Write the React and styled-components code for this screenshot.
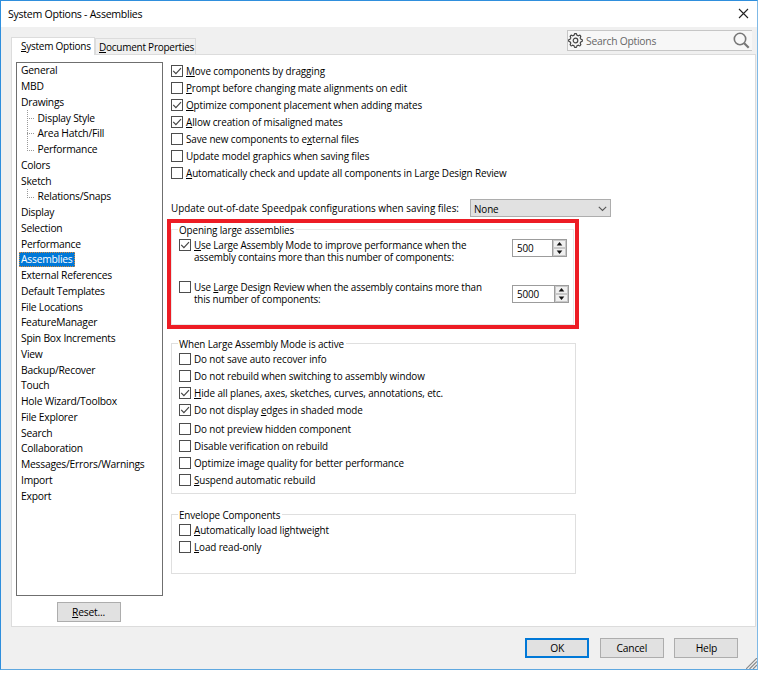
import React, { useState } from 'react';
import styled, { createGlobalStyle } from 'styled-components';

const PAGES = [
  { name: 'General' },
  { name: 'MBD' },
  { name: 'Drawings' },
  { name: 'Display Style', child: true },
  { name: 'Area Hatch/Fill', child: true },
  { name: 'Performance', child: true, last: true, id: 'drawings-performance' },
  { name: 'Colors' },
  { name: 'Sketch' },
  { name: 'Relations/Snaps', child: true, last: true },
  { name: 'Display' },
  { name: 'Selection' },
  { name: 'Performance' },
  { name: 'Assemblies' },
  { name: 'External References' },
  { name: 'Default Templates' },
  { name: 'File Locations' },
  { name: 'FeatureManager' },
  { name: 'Spin Box Increments' },
  { name: 'View' },
  { name: 'Backup/Recover' },
  { name: 'Touch' },
  { name: 'Hole Wizard/Toolbox' },
  { name: 'File Explorer' },
  { name: 'Search' },
  { name: 'Collaboration' },
  { name: 'Messages/Errors/Warnings' },
  { name: 'Import' },
  { name: 'Export' },
];

// "&" marks the access key, as in a Win32 resource file
const GENERAL_OPTIONS = [
  { label: '&Move components by dragging', checked: true },
  { label: '&Prompt before changing mate alignments on edit' },
  { label: '&Optimize component placement when adding mates', checked: true },
  { label: '&Allow creation of misaligned mates', checked: true },
  { label: 'Save new components to e&xternal files' },
  { label: 'Update model graphics when saving files' },
  { label: '&Automatically check and update all components in Large Design Review' },
];

const LARGE_MODE_OPTIONS = [
  { label: 'Do not save auto recover info' },
  { label: 'Do not rebuild when switching to assembly window' },
  { label: '&Hide all planes, axes, sketches, curves, annotations, etc.', checked: true },
  { label: 'Do not display &edges in shaded mode', checked: true },
  { label: 'Do not preview hidden component', space: 1 },
  { label: 'Disable verification on rebuild' },
  { label: 'Optimize image quality for better performance' },
  { label: '&Suspend automatic rebuild' },
];

const ENVELOPE_OPTIONS = [
  { label: '&Automatically load lightweight' },
  { label: '&Load read-only' },
];

const Mnemonic = ({ text }) => {
  const at = text.indexOf('&');
  if (at < 0) return <>{text}</>;
  return (
    <>
      {text.slice(0, at)}
      <Key>{text[at + 1]}</Key>
      {text.slice(at + 2)}
    </>
  );
};

const Option = ({ label, checked, space }) => {
  const [on, setOn] = useState(!!checked);
  return (
    <OptionRow $space={space} onClick={() => setOn(!on)}>
      <CheckBox on={on} />
      <OptionText>
        <Mnemonic text={label} />
      </OptionText>
    </OptionRow>
  );
};

const CheckBox = ({ on }) => (
  <Box>
    {on && (
      <svg width="10" height="10" viewBox="0 0 10 10">
        <path d="M1.2 4.9 L3.9 7.6 L9 2.2" fill="none" stroke="#444" strokeWidth="1.2" />
      </svg>
    )}
  </Box>
);

const Spinner = ({ value, wide }) => (
  <SpinBox $wide={wide}>
    <SpinValue>{value}</SpinValue>
    <SpinButtons>
      <SpinButton>
        <svg width="7" height="4" viewBox="0 0 7 4">
          <path d="M3.5 0 L6.3 3.6 H0.7 Z" fill="#111" />
        </svg>
      </SpinButton>
      <SpinButton>
        <svg width="7" height="4" viewBox="0 0 7 4">
          <path d="M3.5 4 L6.3 0.4 H0.7 Z" fill="#111" />
        </svg>
      </SpinButton>
    </SpinButtons>
  </SpinBox>
);

const gearPath = () => {
  const points = [];
  for (let i = 0; i <= 96; i += 1) {
    const a = (i / 96) * Math.PI * 2;
    const r = 6.1 + 0.75 * Math.tanh(2.4 * Math.cos(8 * a));
    points.push(`${(7.5 + r * Math.cos(a)).toFixed(2)} ${(7.5 + r * Math.sin(a)).toFixed(2)}`);
  }
  return `M${points.join('L')}Z`;
};

const App = () => {
  const [page, setPage] = useState('Assemblies');

  return (
    <>
      <GlobalStyle />
      <Window>
        <TitleBar>
          <Title>System Options - Assemblies</Title>
          <svg width="11" height="11" viewBox="0 0 11 11">
            <path d="M1 1 L10 10 M10 1 L1 10" stroke="#222" strokeWidth="1.1" />
          </svg>
        </TitleBar>
        <TabBar>
          <Tab $active>
            <Mnemonic text="&System Options" />
          </Tab>
          <Tab>
            <Mnemonic text="&Document Properties" />
          </Tab>
          <SearchBox>
            <svg width="15" height="15" viewBox="0 0 15 15">
              <path d={gearPath()} fill="none" stroke="#444" strokeWidth="1.2" />
              <circle cx="7.5" cy="7.5" r="2.3" fill="none" stroke="#444" strokeWidth="1.2" />
            </svg>
            <SearchText>Search Options</SearchText>
            <svg width="17" height="17" viewBox="0 0 17 17">
              <circle cx="7" cy="7" r="5.7" fill="none" stroke="#777" strokeWidth="1.6" />
              <path d="M11.2 11.2 L15.7 15.7" stroke="#777" strokeWidth="2.2" />
            </svg>
          </SearchBox>
        </TabBar>
        <Panel>
          <Sidebar>
            <PageList>
              {PAGES.map(item => {
                const id = item.id || item.name;
                return (
                  <PageRow key={id} onClick={() => setPage(id)}>
                    {item.child && <Branch $last={item.last} />}
                    <PageName $selected={id === page}>{item.name}</PageName>
                  </PageRow>
                );
              })}
            </PageList>
            <Button>
              <Mnemonic text="&Reset..." />
            </Button>
          </Sidebar>
          <Content>
            {GENERAL_OPTIONS.map(option => (
              <Option key={option.label} {...option} />
            ))}
            <SelectRow>
              <SelectLabel>Update out-of-date Speedpak configurations when saving files:</SelectLabel>
              <Select>
                None
                <svg width="9" height="6" viewBox="0 0 9 6">
                  <path d="M0.8 0.8 L4.5 4.5 L8.2 0.8" fill="none" stroke="#555" strokeWidth="1.1" />
                </svg>
              </Select>
            </SelectRow>
            <Highlight>
              <OpeningGroup>
                <Legend>Opening large assemblies</Legend>
                <ThresholdRow>
                  <CheckBox on />
                  <ThresholdText>
                    <Mnemonic text="&Use Large Assembly Mode to improve performance when the" />
                    <br />
                    assembly contains more than this number of components:
                  </ThresholdText>
                  <Spinner value="500" />
                </ThresholdRow>
                <ThresholdRow>
                  <CheckBox />
                  <ThresholdText>
                    <Mnemonic text="Use &Large Design Review when the assembly contains more than" />
                    <br />
                    this number of components:
                  </ThresholdText>
                  <Spinner value="5000" wide />
                </ThresholdRow>
              </OpeningGroup>
            </Highlight>
            <Group $top={9} $height={151}>
              <Legend>When Large Assembly Mode is active</Legend>
              {LARGE_MODE_OPTIONS.map(option => (
                <Option key={option.label} {...option} />
              ))}
            </Group>
            <Group $top={15} $height={60}>
              <Legend>Envelope Components</Legend>
              {ENVELOPE_OPTIONS.map(option => (
                <Option key={option.label} {...option} />
              ))}
            </Group>
          </Content>
        </Panel>
        <Footer>
          <Button $primary>OK</Button>
          <Button>Cancel</Button>
          <Button>Help</Button>
          <Grip width="11" height="11" viewBox="0 0 11 11">
            <path d="M0 11 L11 0 M3.5 11 L11 3.5 M7 11 L11 7" stroke="#8a8a8a" strokeWidth="1.2" />
          </Grip>
        </Footer>
      </Window>
    </>
  );
};

const GlobalStyle = createGlobalStyle`
  * {
    box-sizing: border-box;
  }
  body {
    margin: 0;
    background: #fff;
    color: #000;
    font-family: 'Open Sans', 'Noto Sans', sans-serif;
    font-size: 10.3px;
    letter-spacing: -0.23px;
    line-height: 12px;
    white-space: nowrap;
    overflow: hidden;
    cursor: default;
  }
  svg {
    display: block;
    flex: none;
  }
`;

const Window = styled.div`
  display: flex;
  flex-direction: column;
  width: 758px;
  height: 670px;
  background: #f0f0f0;
  border: 1px solid #2f8fdd;
  border-right-color: #7fb9e6;
  border-bottom-color: #5fa8e0;
`;
const TitleBar = styled.div`
  display: flex;
  justify-content: space-between;
  align-items: center;
  height: 26px;
  padding: 0 8px 2px 7px;
  background: #fff;
`;
const Title = styled.div`
  font-size: 10.6px;
  letter-spacing: -0.28px;
  padding-top: 2px;
`;
const TabBar = styled.div`
  display: flex;
  align-items: flex-end;
  height: 27px;
  padding-left: 10px;
`;
const Tab = styled.div`
  display: flex;
  align-items: center;
  flex: none;
  width: ${({ $active }) => ($active ? 84 : 101)}px;
  height: ${({ $active }) => ($active ? 18 : 16)}px;
  margin-bottom: ${({ $active }) => ($active ? -1 : 0)}px;
  padding: ${({ $active }) => ($active ? '0 0 2px 9px' : '1px 0 0 3px')};
  background: ${({ $active }) => ($active ? '#fff' : '#f0f0f0')};
  border: 1px solid #dcdcdc;
  border-bottom: 0;
  font-size: 10px;
  letter-spacing: -0.25px;
  z-index: 1;
`;
const SearchBox = styled.div`
  display: flex;
  align-items: center;
  width: 185px;
  height: 21px;
  margin: 0 5px 3px auto;
  padding: 0 2px 1px 0;
  background: #f7f7f7;
  border: 1px solid #c6c6c6;
  border-right: 0;
`;
const SearchText = styled.div`
  flex: 1;
  padding: 1px 0 0 3px;
  color: #666;
`;
const Panel = styled.div`
  display: flex;
  height: 573px;
  margin: 0 1px 0 10px;
  background: #fff;
  border: 1px solid #dcdcdc;
`;
const Sidebar = styled.div`
  display: flex;
  flex-direction: column;
  align-items: center;
  gap: 6px;
  width: 147px;
  margin: 7px 8px 0 4px;

  /* Reset sits slightly left of centre */
  > :last-child {
    margin-right: 2px;
  }
`;
const PageList = styled.div`
  width: 147px;
  height: 534px;
  border: 1px solid #6f6f6f;
`;
const PageRow = styled.div`
  display: flex;
  align-items: center;
  height: 15.76px;
  padding-left: 2px;
`;
const PageName = styled.div`
  height: 15px;
  padding: 0 1px;
  line-height: 13.5px;
  border: 1px dotted ${({ $selected }) => ($selected ? '#d98a3a' : 'transparent')};
  background: ${({ $selected }) => ($selected ? '#0078d7' : 'transparent')};
  color: ${({ $selected }) => ($selected ? '#fff' : 'inherit')};
`;
const Branch = styled.div`
  align-self: stretch;
  width: 8px;
  margin-left: 8px;
  margin-right: 0.6px;
  background: linear-gradient(90deg, #999 50%, transparent 50%) 0 50% / 2px 1px repeat-x,
    linear-gradient(#999 50%, transparent 50%) 0 0 / 1px 2px repeat-y;
  ${({ $last }) =>
    $last &&
    `background: linear-gradient(90deg, #999 50%, transparent 50%) 0 8px / 2px 1px repeat-x,
      linear-gradient(#fff, #fff) 0 9px / 1px 8px no-repeat,
      linear-gradient(#999 50%, transparent 50%) 0 0 / 1px 2px repeat-y;`}
`;
const Content = styled.div`
  display: flex;
  flex-direction: column;
  width: 440px;
  padding-top: 7px;
  font-size: 9.9px;
  letter-spacing: -0.11px;
`;
const OptionRow = styled.div`
  display: flex;
  align-items: center;
  flex: none;
  height: 17.1px;
  margin-top: ${({ $space }) => $space || 0}px;
`;
const Box = styled.div`
  flex: none;
  width: 12px;
  height: 12px;
  background: #fff;
  border: 1px solid #4d4d4d;
`;
const OptionText = styled.div`
  padding-left: 3px;
`;
const Key = styled.span`
  text-decoration: underline;
  text-decoration-thickness: 1px;
  text-underline-offset: 1px;
`;
const SelectRow = styled.div`
  display: flex;
  align-items: center;
  height: 19px;
  margin-top: 17px;
`;
const SelectLabel = styled.div`
  width: 299px;
  letter-spacing: 0;
`;
const Select = styled.div`
  display: flex;
  align-items: center;
  justify-content: space-between;
  width: 141px;
  height: 18px;
  padding: 1px 3px 0;
  background: #e1e1e1;
  border: 1px solid #adadad;
`;
const Highlight = styled.div`
  flex: none;
  width: 412px;
  height: 110px;
  margin: 1px 0 0 -4px;
  border: 4px solid #ed1c24;
`;
const Group = styled.fieldset`
  flex: none;
  min-width: 0;
  width: 405px;
  height: ${({ $height }) => $height + 5}px;
  margin: ${({ $top }) => $top}px 0 0;
  padding: 1px 7px 0;
  border: 1px solid #dfdfdf;
`;
const OpeningGroup = styled(Group)`
  width: 403px;
  height: 101px;
  margin: 1px 0 0;
  padding: 3px 0 0 7px;
  border-color: #e8e8e8;
`;
const Legend = styled.legend`
  margin-left: -1px;
  padding: 0 2px 0 1px;
  letter-spacing: -0.13px;
`;
const ThresholdRow = styled.div`
  display: flex;
  align-items: flex-start;
  height: 42px;
`;
const ThresholdText = styled.div`
  width: 321px;
  padding-left: 3px;
  line-height: 12px;
  letter-spacing: -0.17px;
`;
const SpinBox = styled.div`
  display: flex;
  justify-content: space-between;
  width: ${({ $wide }) => ($wide ? 57 : 55)}px;
  height: 18px;
  margin-top: ${({ $wide }) => ($wide ? 4 : 0)}px;
  border: 1px solid #9c9c9c;
`;
const SpinValue = styled.div`
  padding: 2px 0 0 4px;
`;
const SpinButtons = styled.div`
  display: flex;
  flex-direction: column;
  width: 14px;
  border-left: 1px solid #9c9c9c;
`;
const SpinButton = styled.div`
  display: flex;
  align-items: center;
  justify-content: center;
  flex: 1;
  background: #f0f0f0;
  border: 1px solid #c8c8c8;
`;
const Button = styled.div`
  display: flex;
  align-items: center;
  justify-content: center;
  flex: none;
  width: 64px;
  height: 20px;
  background: #e1e1e1;
  border: ${({ $primary }) => ($primary ? '2px solid #0078d7' : '1px solid #adadad')};
`;
const Footer = styled.div`
  display: flex;
  flex: 1;
  justify-content: flex-end;
  gap: 10.6px;
  padding: 11px 0 0;
`;
const Grip = styled.svg`
  align-self: flex-end;
  margin-left: -3px;
`;

export default App;
